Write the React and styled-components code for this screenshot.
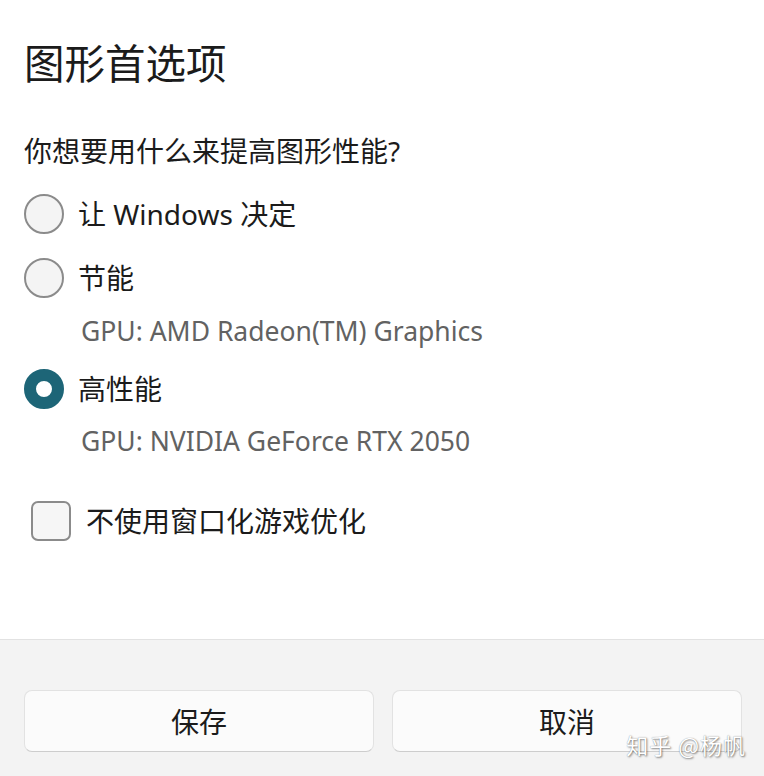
import React, { useState } from "react";
import styled, { createGlobalStyle, css } from "styled-components";

const GlobalStyle = createGlobalStyle`
  html, body {
    margin: 0;
    padding: 0;
    background: #ffffff;
  }
  body {
    font-family: "Noto Sans", "Noto Sans CJK SC", sans-serif;
    color: #1b1b1b;
  }
`;

const Dialog = styled.div`
  position: relative;
  width: 764px;
  height: 776px;
  display: flex;
  flex-direction: column;
  overflow: hidden;
`;

const Content = styled.div`
  flex: 1;
  padding: 38px 24px 0;
  background: #ffffff;
`;

const Title = styled.h1`
  margin: 0;
  font-size: 40.5px;
  line-height: 52px;
  font-weight: 400;
`;

const Question = styled.div`
  margin-top: 43px;
  font-size: 28px;
  line-height: 36px;
`;

const RadioRow = styled.label`
  display: flex;
  align-items: center;
  gap: 14px;
  height: 40px;
  margin-top: ${p => p.$top}px;
  cursor: pointer;
`;

const RadioCircle = styled.span`
  box-sizing: border-box;
  width: 40px;
  height: 40px;
  border-radius: 50%;
  flex: none;
  border: 2px solid #8b8b8b;
  background: #f4f4f4;
  ${p =>
    p.$checked &&
    css`
      border: 12.5px solid #1d6577;
      background: #ffffff;
    `}
`;

const OptionText = styled.span`
  font-size: 28px;
  line-height: 36px;
`;

const SubText = styled.div`
  margin-top: ${p => p.$top}px;
  padding-left: 57px;
  font-size: 26.5px;
  line-height: 36px;
  color: #626262;
`;

const CheckRow = styled.label`
  display: flex;
  align-items: center;
  gap: 15px;
  margin-top: 42px;
  margin-left: 7px;
  height: 40px;
  cursor: pointer;
`;

const CheckBox = styled.span`
  box-sizing: border-box;
  width: 40px;
  height: 40px;
  flex: none;
  border-radius: 7px;
  border: 2px solid #8b8b8b;
  background: #f6f6f6;
`;

const Footer = styled.div`
  height: 137px;
  flex: none;
  border-top: 1px solid #e2e2e2;
  background: #f3f3f3;
  padding: 50px 22px 0 24px;
  box-sizing: border-box;
  display: grid;
  grid-template-columns: 1fr 1fr;
  column-gap: 18px;
  align-content: start;
`;

const Button = styled.button`
  height: 62px;
  border-radius: 8px;
  border: 1px solid #e2e2e2;
  border-bottom-color: #cdcdcd;
  background: #fbfbfb;
  font-family: "Noto Sans", "Noto Sans CJK SC", sans-serif;
  font-size: 28px;
  color: #1b1b1b;
  cursor: pointer;
`;

const Watermark = styled.div`
  position: absolute;
  right: 18px;
  bottom: 16px;
  font-family: "Noto Sans CJK SC", sans-serif;
  font-size: 22px;
  color: #ffffff;
  text-shadow: 1px 1px 2px rgba(0, 0, 0, 0.45), 0 0 1px rgba(0, 0, 0, 0.4);
  letter-spacing: 1px;
`;

const options = [
  { id: "auto", label: "让 Windows 决定", top: 25 },
  { id: "save", label: "节能", top: 24, gpu: "GPU: AMD Radeon(TM) Graphics", gpuTop: 15 },
  { id: "high", label: "高性能", top: 20, gpu: "GPU: NVIDIA GeForce RTX 2050", gpuTop: 14 }
];

const App = () => {
  const [choice, setChoice] = useState("high");
  return (
    <Dialog>
      <GlobalStyle />
      <Content>
        <Title>图形首选项</Title>
        <Question>你想要用什么来提高图形性能?</Question>
        {options.map(o => (
          <React.Fragment key={o.id}>
            <RadioRow $top={o.top} onClick={() => setChoice(o.id)}>
              <RadioCircle $checked={choice === o.id} />
              <OptionText>{o.label}</OptionText>
            </RadioRow>
            {o.gpu && <SubText $top={o.gpuTop}>{o.gpu}</SubText>}
          </React.Fragment>
        ))}
        <CheckRow>
          <CheckBox />
          <OptionText>不使用窗口化游戏优化</OptionText>
        </CheckRow>
      </Content>
      <Footer>
        <Button>保存</Button>
        <Button>取消</Button>
      </Footer>
      <Watermark>知乎 @杨帆</Watermark>
    </Dialog>
  );
};

export default App;
